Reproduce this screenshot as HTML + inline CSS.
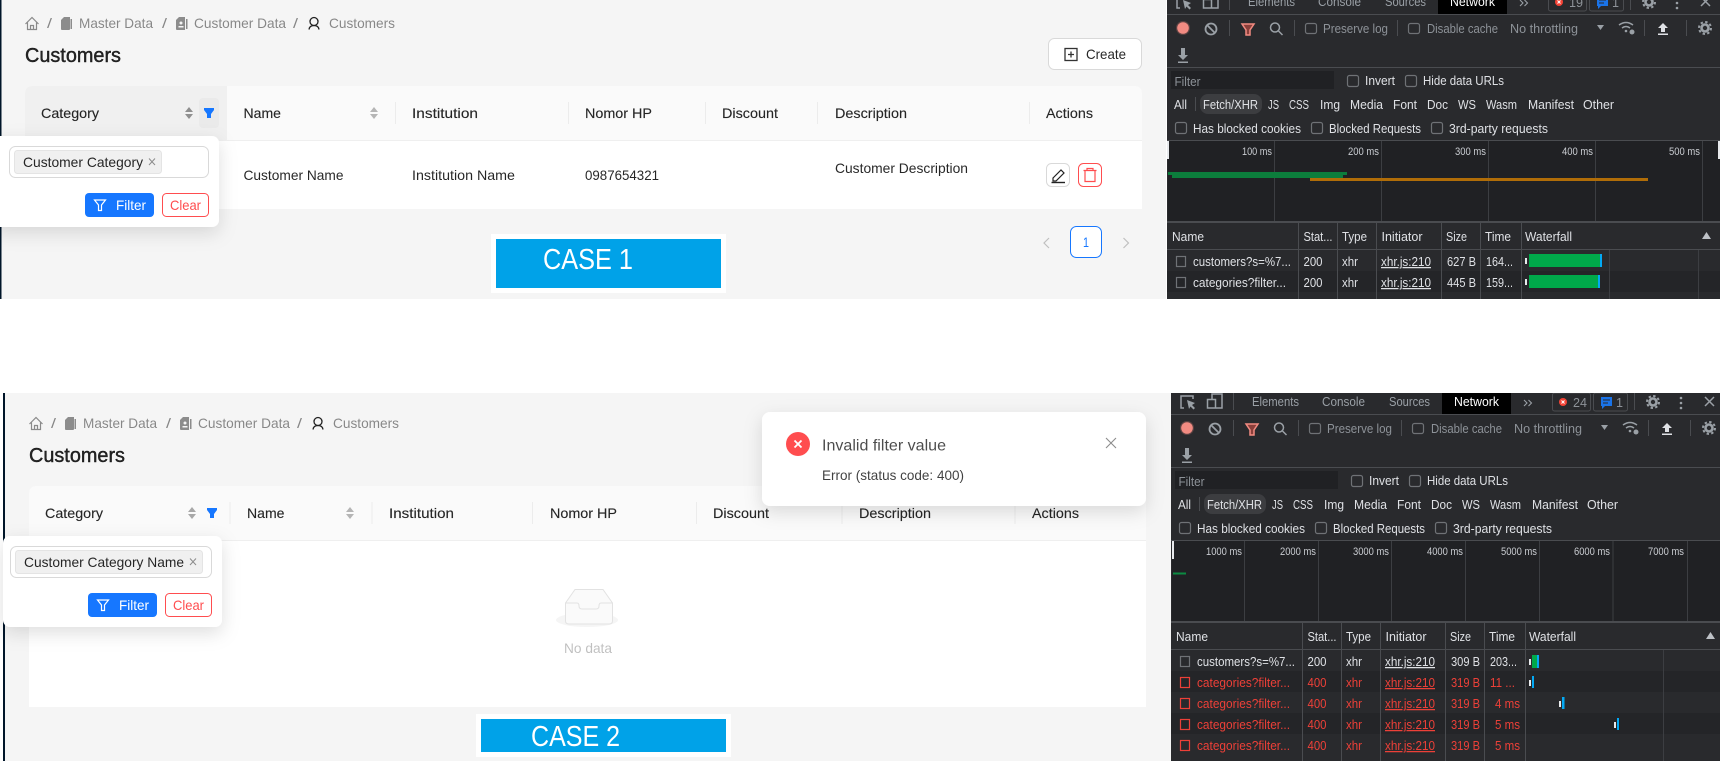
<!DOCTYPE html>
<html><head><meta charset="utf-8"><title>Customers</title>
<style>
html,body{margin:0;padding:0;background:#fff;width:1720px;height:761px;overflow:hidden}
svg{display:block}
text{font-family:"Liberation Sans",sans-serif;font-size:14px;fill:rgba(0,0,0,.85);white-space:pre}
.bc{fill:rgba(0,0,0,.45)}
.dt{font-size:12.5px;fill:#dfe1e5}
.dg{font-size:12.5px;fill:#8d9298}
.tb{font-size:12.5px;fill:#9aa0a6}
.rd{font-size:12.5px;fill:#ed4038}
.ms{font-size:11px;fill:#c9ccd1}
.ln{stroke:#4a4c50;stroke-width:1;fill:none}
.cb{fill:none;stroke:#6f7276;stroke-width:1.2}
.ic{fill:#9aa0a6}
.ics{fill:none;stroke:#9aa0a6;stroke-width:1.5}
.ge1{fill:none;stroke:#9aa0a6;stroke-width:2.6}
.ge2{fill:none;stroke:#9aa0a6;stroke-width:2;stroke-dasharray:2.4 2.31}
</style></head><body>
<svg width="1720" height="761" viewBox="0 0 1720 761" xmlns="http://www.w3.org/2000/svg">
<defs>
<filter id="sh" x="-30%" y="-40%" width="160%" height="200%"><feDropShadow dx="0" dy="6" stdDeviation="9" flood-color="#000" flood-opacity=".13"/></filter>
<clipPath id="c1"><rect x="1166" y="0" width="554" height="299"/></clipPath>
<clipPath id="c2"><rect x="1171" y="393" width="549" height="368"/></clipPath>
<clipPath id="a1"><rect x="0" y="0" width="1166" height="299"/></clipPath>
<clipPath id="a2"><rect x="0" y="393" width="1171" height="368"/></clipPath>
</defs>

<!-- CASE 1 APP -->
<g clip-path="url(#a1)">
<rect x="0" y="0" width="1166" height="299" fill="#f5f5f5"/>
<rect x="0" y="0" width="1.5" height="299" fill="#001529"/>
<path d="M25.5 24 L32 17.5 L38.5 24 M27.5 22.5 V29.5 H36.5 V22.5 M30.5 29.5 V25.5 H33.5 V29.5" fill="none" stroke="#8a8a8a" stroke-width="1.2"/>
<text class="bc" x="47" y="28" textLength="5" lengthAdjust="spacingAndGlyphs">/</text>
<path d="M61 20 L64 17 H70 V29 Q70 30 69 30 H62 Q61 30 61 29 Z" fill="#8c8c8c"/><rect x="70.500" y="19" width="1.500" height="10" fill="#8c8c8c"/>
<text class="bc" x="79" y="28" textLength="74" lengthAdjust="spacingAndGlyphs">Master Data</text>
<text class="bc" x="162" y="28" textLength="5" lengthAdjust="spacingAndGlyphs">/</text>
<path d="M176 20 L179 17 H185 V30 H177 Q176 30 176 29 Z" fill="#8c8c8c"/><rect x="186" y="19" width="1.5" height="10" fill="#8c8c8c"/><circle cx="181" cy="23" r="1.5" fill="#f5f5f5"/><rect x="178.500" y="26" width="5" height="1.500" fill="#f5f5f5"/>
<text class="bc" x="194" y="28" textLength="92" lengthAdjust="spacingAndGlyphs">Customer Data</text>
<text class="bc" x="293" y="28" textLength="5" lengthAdjust="spacingAndGlyphs">/</text>
<circle cx="314" cy="21.500" r="4" fill="none" stroke="#222" stroke-width="1.300"/><path d="M309 29.500 Q309.500 25.500 314 25.500 Q318.500 25.500 319 29.500" fill="none" stroke="#222" stroke-width="1.300"/>
<text class="bc" x="329" y="28" textLength="66" lengthAdjust="spacingAndGlyphs">Customers</text>
<text x="25" y="62" textLength="96" lengthAdjust="spacingAndGlyphs" style="font-size:20px;stroke:rgba(0,0,0,.85);stroke-width:.4">Customers</text>
<rect x="1048.500" y="38.500" width="93" height="31" rx="6" fill="#fff" stroke="#d9d9d9"/>
<rect x="1065" y="48.500" width="12" height="12" fill="none" stroke="#333" stroke-width="1.300"/><path d="M1071 51.500 V57.500 M1068 54.500 H1074" stroke="#333" stroke-width="1.300"/>
<text x="1086" y="59" textLength="40" lengthAdjust="spacingAndGlyphs">Create</text>
<path d="M25 94 Q25 86 33 86 H1134 Q1142 86 1142 94 V141 H25 Z" fill="#fafafa"/>
<path d="M25 94 Q25 86 33 86 H227 V141 H25 Z" fill="#f0f0f0"/>
<rect x="25" y="141" width="1117" height="68" fill="#fff"/>
<rect x="25" y="140" width="1117" height="1" fill="#efefef"/>
<g fill="#ececec"><rect x="395" y="102" width="1" height="22"/><rect x="568" y="102" width="1" height="22"/><rect x="705" y="102" width="1" height="22"/><rect x="817" y="102" width="1" height="22"/><rect x="1029" y="102" width="1" height="22"/></g>
<text x="41" y="118" textLength="58" lengthAdjust="spacingAndGlyphs" style="stroke:rgba(0,0,0,.5);stroke-width:.2">Category</text>
<text x="243.500" y="118" textLength="37.500" lengthAdjust="spacingAndGlyphs" style="stroke:rgba(0,0,0,.5);stroke-width:.2">Name</text>
<text x="412" y="118" textLength="66" lengthAdjust="spacingAndGlyphs" style="stroke:rgba(0,0,0,.5);stroke-width:.2">Institution</text>
<text x="585" y="118" textLength="67" lengthAdjust="spacingAndGlyphs" style="stroke:rgba(0,0,0,.5);stroke-width:.2">Nomor HP</text>
<text x="722" y="118" textLength="56" lengthAdjust="spacingAndGlyphs" style="stroke:rgba(0,0,0,.5);stroke-width:.2">Discount</text>
<text x="835" y="118" textLength="72" lengthAdjust="spacingAndGlyphs" style="stroke:rgba(0,0,0,.5);stroke-width:.2">Description</text>
<text x="1046" y="118" textLength="47" lengthAdjust="spacingAndGlyphs" style="stroke:rgba(0,0,0,.5);stroke-width:.2">Actions</text>
<path d="M189 107 L193 112 H185 Z M185 114 H193 L189 119 Z" fill="#8f8f8f"/>
<path d="M374 107 L378 112 H370 Z M370 114 H378 L374 119 Z" fill="#b5b5b5"/>
<rect x="199" y="98" width="20" height="30" rx="4" fill="#eaeaea"/>
<path d="M204 108 H214 V110 L211 114 V118 H207 V114 L204 110 Z" fill="#1677ff"/>
<text x="243.500" y="180" textLength="100" lengthAdjust="spacingAndGlyphs">Customer Name</text>
<text x="412" y="180" textLength="103" lengthAdjust="spacingAndGlyphs">Institution Name</text>
<text x="585" y="180" textLength="74" lengthAdjust="spacingAndGlyphs">0987654321</text>
<text x="835" y="173" textLength="133" lengthAdjust="spacingAndGlyphs">Customer Description</text>
<rect x="1046.500" y="163.500" width="23" height="23" rx="5" fill="#fff" stroke="#d9d9d9"/>
<path d="M1053 178 L1061 170 L1064 173 L1056 181 H1053 Z" fill="none" stroke="#222" stroke-width="1.200"/><path d="M1051.500 182.500 H1065" stroke="#222" stroke-width="1.400"/>
<rect x="1078.500" y="163.500" width="23" height="23" rx="5" fill="#fff" stroke="#ff4d4f"/>
<path d="M1083.500 170.500 H1096.500 M1087 170.500 V168.500 H1093 V170.500 M1085 170.500 V181.500 H1095 V170.500" fill="none" stroke="#ff4d4f" stroke-width="1.200"/>
<path d="M1049 238 L1044 243 L1049 248" fill="none" stroke="#bfbfbf" stroke-width="1.200"/>
<rect x="1070.500" y="226.500" width="31" height="31" rx="6" fill="#fff" stroke="#1677ff"/>
<text x="1083" y="247" textLength="6" lengthAdjust="spacingAndGlyphs" style="fill:#1677ff">1</text>
<path d="M1123.500 238 L1128.500 243 L1123.500 248" fill="none" stroke="#bfbfbf" stroke-width="1.200"/>
<rect x="-8" y="136" width="227" height="91" rx="7" fill="#fff" filter="url(#sh)"/>
<rect x="9.500" y="146.500" width="199" height="31" rx="6" fill="#fff" stroke="#d9d9d9"/>
<rect x="14.500" y="150.500" width="147" height="23" rx="3" fill="#f0f0f0" stroke="#e4e4e4"/>
<text x="23" y="167" textLength="120" lengthAdjust="spacingAndGlyphs">Customer Category</text>
<path d="M149 158.500 L155 165 M155 158.500 L149 165" stroke="#8c8c8c" stroke-width="1"/>
<rect x="85" y="193" width="69" height="24" rx="4" fill="#1677ff"/>
<path d="M94.500 200 H105.500 L101.500 205 V210.500 H98.500 V205 Z" fill="none" stroke="#fff" stroke-width="1.200"/>
<text x="116" y="210" textLength="30" lengthAdjust="spacingAndGlyphs" style="fill:#fff">Filter</text>
<rect x="162.500" y="193.500" width="46" height="23" rx="4" fill="#fff" stroke="#ff4d4f"/>
<text x="170" y="210" textLength="31" lengthAdjust="spacingAndGlyphs" style="fill:#ff4d4f">Clear</text>
<rect x="491" y="234" width="235" height="59" fill="#fff"/>
<rect x="496" y="239" width="225" height="49" fill="#00a2e8"/>
<text x="543" y="269" textLength="90" lengthAdjust="spacingAndGlyphs" style="font-size:29px;fill:#fff">CASE 1</text>
</g>

<!-- CASE 1 DEVTOOLS -->
<g clip-path="url(#c1)">
<rect x="1167" y="-7" width="553" height="368" fill="#292a2d"/>
<rect x="1438" y="-7" width="69" height="21" fill="#000"/>
<rect x="1167" y="14" width="553" height="1" fill="#4a4c50"/>
<path d="M1180 8 H1177 V-4 H1189 V-1" class="ics"/><path d="M1183 0 L1191 3 L1188 5 L1191 8 L1189.500 9.500 L1186.500 6.500 L1185 9 Z" class="ic"/>
<path d="M1208 0 V-6 H1218 V8 H1212" class="ics"/><rect x="1203.500" y="-0.500" width="8" height="8.500" class="ics"/>
<path d="M1229.500 -7 V10" class="ln"/>
<text class="tb" x="1248" y="6" textLength="47" lengthAdjust="spacingAndGlyphs">Elements</text>
<text class="tb" x="1318" y="6" textLength="43" lengthAdjust="spacingAndGlyphs">Console</text>
<text class="tb" x="1385" y="6" textLength="41" lengthAdjust="spacingAndGlyphs">Sources</text>
<text x="1450" y="6" textLength="45" lengthAdjust="spacingAndGlyphs" style="font-size:12.5px;fill:#fff">Network</text>
<path d="M1520 0 L1523 3 L1520 6 M1524.500 0 L1527.500 3 L1524.500 6" fill="none" stroke="#9aa0a6" stroke-width="1.100"/>
<rect x="1548.500" y="-7" width="38" height="18" rx="2" fill="none" stroke="#4a4c50"/><circle cx="1559" cy="2" r="4" fill="#f44336"/><path d="M1557.500 .5 L1560.500 3.500 M1560.500 .5 L1557.500 3.500" stroke="#fff" stroke-width="1"/>
<text class="dg" x="1569" y="7" textLength="14" lengthAdjust="spacingAndGlyphs">19</text>
<rect x="1589.500" y="-7" width="34" height="18" rx="2" fill="none" stroke="#4a4c50"/><path d="M1597 -3 H1608 V6 H1601 L1598 9 V6 H1597 Z" fill="#1a73e8"/><path d="M1599 0 H1606 M1599 3 H1604" stroke="#292a2d"/>
<text class="dg" x="1612" y="7" textLength="7" lengthAdjust="spacingAndGlyphs">1</text>
<path d="M1630.500 -7 V10" class="ln"/>
<circle cx="1649" cy="2" r="3.500" class="ge1"/><circle cx="1649" cy="2" r="6" class="ge2"/>
<circle cx="1677" cy="-2" r="1.300" class="ic"/><circle cx="1677" cy="3" r="1.300" class="ic"/><circle cx="1677" cy="8" r="1.300" class="ic"/>
<path d="M1701 -3 L1710 6 M1710 -3 L1701 6" class="ics"/>
<circle cx="1183" cy="28" r="7" fill="#f28b82" opacity=".25"/><circle cx="1183" cy="28" r="5.800" fill="#f28b82"/>
<circle cx="1211" cy="29" r="5.500" fill="none" stroke="#9aa0a6" stroke-width="1.800"/><path d="M1207 25 L1215 33" stroke="#9aa0a6" stroke-width="1.800"/>
<path d="M1229.500 20 V36" class="ln"/>
<path d="M1242 24 H1254 L1250 30 V35 H1246 V30 Z" fill="#8a3f3a" stroke="#f28b82" stroke-width="1.500"/>
<circle cx="1275" cy="27.500" r="4.500" class="ics"/><path d="M1278.500 31 L1282.500 35" class="ics"/>
<path d="M1294.500 20 V36" class="ln"/>
<rect x="1305.500" y="23.500" width="11" height="10" rx="2" class="cb"/>
<text class="dg" x="1323" y="33" textLength="65" lengthAdjust="spacingAndGlyphs">Preserve log</text>
<path d="M1397.500 20 V36" class="ln"/>
<rect x="1408.500" y="23.500" width="11" height="10" rx="2" class="cb"/>
<text class="dg" x="1427" y="33" textLength="71" lengthAdjust="spacingAndGlyphs">Disable cache</text>
<text class="dg" x="1510" y="33" textLength="68" lengthAdjust="spacingAndGlyphs">No throttling</text>
<path d="M1597 25 H1604 L1600.500 30 Z" class="ic"/>
<path d="M1619 25 Q1626 20 1633 25 M1622 28 Q1626 25 1630 28" class="ics"/><circle cx="1626" cy="31" r="1.300" class="ic"/><circle cx="1632" cy="32" r="2.500" class="ic"/>
<path d="M1644.500 20 V36" class="ln"/>
<path d="M1663 23 L1668 28 H1665 V32 H1661 V28 H1658 Z M1658 33.500 H1668 V35 H1658 Z" fill="#dfe1e5"/>
<path d="M1686.500 20 V36" class="ln"/>
<circle cx="1705" cy="28" r="3.500" class="ge1"/><circle cx="1705" cy="28" r="6" class="ge2"/>
<path d="M1183 60 L1178 55 H1181 V48 H1185 V55 H1188 Z M1178 61.500 H1188 V63 H1178 Z" fill="#9aa0a6"/>
<rect x="1167" y="67" width="553" height="1" fill="#4a4c50"/>
<rect x="1171" y="71" width="163" height="18" fill="#202124"/>
<text class="dg" x="1174.500" y="86" textLength="26" lengthAdjust="spacingAndGlyphs">Filter</text>
<rect x="1347.500" y="75.500" width="11" height="11" rx="2" class="cb"/>
<text class="dt" x="1365" y="85" textLength="30" lengthAdjust="spacingAndGlyphs">Invert</text>
<rect x="1405.500" y="75.500" width="11" height="11" rx="2" class="cb"/>
<text class="dt" x="1423" y="85" textLength="81" lengthAdjust="spacingAndGlyphs">Hide data URLs</text>
<text class="dt" x="1174" y="109" textLength="13" lengthAdjust="spacingAndGlyphs">All</text>
<path d="M1195.500 97 V111" class="ln"/>
<rect x="1200" y="94" width="62" height="20" rx="8" fill="#3c3d40"/>
<text class="dt" x="1203" y="109" textLength="55" lengthAdjust="spacingAndGlyphs">Fetch/XHR</text>
<text class="dt" x="1268" y="109" textLength="11" lengthAdjust="spacingAndGlyphs">JS</text>
<text class="dt" x="1289" y="109" textLength="20" lengthAdjust="spacingAndGlyphs">CSS</text>
<text class="dt" x="1320" y="109" textLength="20" lengthAdjust="spacingAndGlyphs">Img</text>
<text class="dt" x="1350" y="109" textLength="33" lengthAdjust="spacingAndGlyphs">Media</text>
<text class="dt" x="1393" y="109" textLength="24" lengthAdjust="spacingAndGlyphs">Font</text>
<text class="dt" x="1427" y="109" textLength="21" lengthAdjust="spacingAndGlyphs">Doc</text>
<text class="dt" x="1458" y="109" textLength="18" lengthAdjust="spacingAndGlyphs">WS</text>
<text class="dt" x="1486" y="109" textLength="31" lengthAdjust="spacingAndGlyphs">Wasm</text>
<text class="dt" x="1528" y="109" textLength="46" lengthAdjust="spacingAndGlyphs">Manifest</text>
<text class="dt" x="1583" y="109" textLength="31" lengthAdjust="spacingAndGlyphs">Other</text>
<rect x="1175.500" y="122.500" width="11" height="11" rx="2" class="cb"/>
<text class="dt" x="1193" y="133" textLength="108" lengthAdjust="spacingAndGlyphs">Has blocked cookies</text>
<rect x="1311.500" y="122.500" width="11" height="11" rx="2" class="cb"/>
<text class="dt" x="1329" y="133" textLength="92" lengthAdjust="spacingAndGlyphs">Blocked Requests</text>
<rect x="1431.500" y="122.500" width="11" height="11" rx="2" class="cb"/>
<text class="dt" x="1449" y="133" textLength="99" lengthAdjust="spacingAndGlyphs">3rd-party requests</text>
<rect x="1167" y="140" width="553" height="1" fill="#4a4c50"/>
<rect x="1168" y="141" width="552" height="80" fill="#202124"/>
<g fill="#3c3e42"><rect x="1274" y="141" width="1" height="80"/><rect x="1381" y="141" width="1" height="80"/><rect x="1488" y="141" width="1" height="80"/><rect x="1595" y="141" width="1" height="80"/><rect x="1702" y="141" width="1" height="80"/></g>
<rect x="1167" y="141" width="2" height="18" fill="#e8eaed"/><rect x="1718" y="141" width="2" height="18" fill="#e8eaed"/>
<text class="ms" x="1242" y="155" textLength="30" lengthAdjust="spacingAndGlyphs">100 ms</text>
<text class="ms" x="1348" y="155" textLength="31" lengthAdjust="spacingAndGlyphs">200 ms</text>
<text class="ms" x="1455" y="155" textLength="31" lengthAdjust="spacingAndGlyphs">300 ms</text>
<text class="ms" x="1562" y="155" textLength="31" lengthAdjust="spacingAndGlyphs">400 ms</text>
<text class="ms" x="1669" y="155" textLength="31" lengthAdjust="spacingAndGlyphs">500 ms</text>
<rect x="1168" y="172" width="179" height="3" fill="#0c7d3c"/>
<rect x="1172" y="175" width="171" height="3" fill="#0c7d3c"/>
<rect x="1310" y="178" width="338" height="3" fill="#b06d08"/>
<rect x="1167" y="221" width="553" height="2" fill="#4a4c50"/>
<rect x="1167" y="249" width="553" height="1" fill="#4a4c50"/>
<text class="dt" x="1172" y="241" textLength="32" lengthAdjust="spacingAndGlyphs">Name</text>
<text class="dt" x="1303.500" y="241" textLength="29" lengthAdjust="spacingAndGlyphs">Stat...</text>
<text class="dt" x="1342" y="241" textLength="25" lengthAdjust="spacingAndGlyphs">Type</text>
<text class="dt" x="1381.500" y="241" textLength="41" lengthAdjust="spacingAndGlyphs">Initiator</text>
<text class="dt" x="1446" y="241" textLength="21" lengthAdjust="spacingAndGlyphs">Size</text>
<text class="dt" x="1485" y="241" textLength="26" lengthAdjust="spacingAndGlyphs">Time</text>
<text class="dt" x="1525" y="241" textLength="47" lengthAdjust="spacingAndGlyphs">Waterfall</text>
<path d="M1702 239 H1711 L1706.500 232 Z" fill="#bdc1c6"/>
<rect x="1167" y="271" width="553" height="21" fill="#242528"/>
<g fill="#4a4c50"><rect x="1298" y="223" width="1" height="76"/><rect x="1337" y="223" width="1" height="76"/><rect x="1376" y="223" width="1" height="76"/><rect x="1441" y="223" width="1" height="76"/><rect x="1480" y="223" width="1" height="76"/><rect x="1521" y="223" width="1" height="76"/></g>
<g fill="#3c3e42"><rect x="1609" y="250" width="1" height="49"/><rect x="1698" y="250" width="1" height="49"/></g>
<rect x="1176.500" y="256.500" width="9" height="10" class="cb"/>
<text class="dt" x="1193" y="266" textLength="98" lengthAdjust="spacingAndGlyphs">customers?s=%7...</text>
<text class="dt" x="1303.500" y="266" textLength="19" lengthAdjust="spacingAndGlyphs">200</text>
<text class="dt" x="1342" y="266" textLength="16" lengthAdjust="spacingAndGlyphs">xhr</text>
<text class="dt" x="1381" y="266" textLength="50" lengthAdjust="spacingAndGlyphs" text-decoration="underline">xhr.js:210</text>
<text class="dt" x="1447" y="266" textLength="29" lengthAdjust="spacingAndGlyphs">627 B</text>
<text class="dt" x="1486" y="266" textLength="27" lengthAdjust="spacingAndGlyphs">164...</text>
<rect x="1525" y="258" width="2" height="6" fill="#e8eaed"/><rect x="1529" y="254" width="71" height="13" fill="#00a84a"/><rect x="1600" y="254" width="2" height="13" fill="#03a9f4"/>
<rect x="1176.500" y="277.500" width="9" height="10" class="cb"/>
<text class="dt" x="1193" y="287" textLength="93" lengthAdjust="spacingAndGlyphs">categories?filter...</text>
<text class="dt" x="1303.500" y="287" textLength="19" lengthAdjust="spacingAndGlyphs">200</text>
<text class="dt" x="1342" y="287" textLength="16" lengthAdjust="spacingAndGlyphs">xhr</text>
<text class="dt" x="1381" y="287" textLength="50" lengthAdjust="spacingAndGlyphs" text-decoration="underline">xhr.js:210</text>
<text class="dt" x="1447" y="287" textLength="29" lengthAdjust="spacingAndGlyphs">445 B</text>
<text class="dt" x="1486" y="287" textLength="27" lengthAdjust="spacingAndGlyphs">159...</text>
<rect x="1525" y="279" width="2" height="6" fill="#e8eaed"/><rect x="1529" y="275" width="69" height="13" fill="#00a84a"/><rect x="1598" y="275" width="2" height="13" fill="#03a9f4"/>
</g>

<!-- CASE 2 APP -->
<g clip-path="url(#a2)">
<rect x="3" y="393" width="1168" height="368" fill="#f5f5f5"/>
<rect x="3" y="393" width="2" height="368" fill="#001529"/>
<g transform="translate(4,400)">
<path d="M25.500 24 L32 17.500 L38.500 24 M27.500 22.500 V29.500 H36.500 V22.500 M30.500 29.500 V25.500 H33.500 V29.500" fill="none" stroke="#8a8a8a" stroke-width="1.200"/>
<text class="bc" x="47" y="28" textLength="5" lengthAdjust="spacingAndGlyphs">/</text>
<path d="M61 20 L64 17 H70 V29 Q70 30 69 30 H62 Q61 30 61 29 Z" fill="#8c8c8c"/><rect x="70.500" y="19" width="1.500" height="10" fill="#8c8c8c"/>
<text class="bc" x="79" y="28" textLength="74" lengthAdjust="spacingAndGlyphs">Master Data</text>
<text class="bc" x="162" y="28" textLength="5" lengthAdjust="spacingAndGlyphs">/</text>
<path d="M176 20 L179 17 H185 V30 H177 Q176 30 176 29 Z" fill="#8c8c8c"/><rect x="186" y="19" width="1.500" height="10" fill="#8c8c8c"/><circle cx="181" cy="23" r="1.500" fill="#f5f5f5"/><rect x="178.500" y="26" width="5" height="1.500" fill="#f5f5f5"/>
<text class="bc" x="194" y="28" textLength="92" lengthAdjust="spacingAndGlyphs">Customer Data</text>
<text class="bc" x="293" y="28" textLength="5" lengthAdjust="spacingAndGlyphs">/</text>
<circle cx="314" cy="21.500" r="4" fill="none" stroke="#222" stroke-width="1.300"/><path d="M309 29.500 Q309.500 25.500 314 25.500 Q318.500 25.500 319 29.500" fill="none" stroke="#222" stroke-width="1.300"/>
<text class="bc" x="329" y="28" textLength="66" lengthAdjust="spacingAndGlyphs">Customers</text>
<text x="25" y="62" textLength="96" lengthAdjust="spacingAndGlyphs" style="font-size:20px;stroke:rgba(0,0,0,.85);stroke-width:.4">Customers</text>
</g>
<path d="M29 494 Q29 486 37 486 H1138 Q1146 486 1146 494 V541 H29 Z" fill="#fafafa"/>
<rect x="29" y="541" width="1117" height="166" fill="#fff"/>
<rect x="29" y="540" width="1117" height="1" fill="#efefef"/>
<g fill="#ececec"><rect x="229.500" y="502" width="1" height="22"/><rect x="371.500" y="502" width="1" height="22"/><rect x="532" y="502" width="1" height="22"/><rect x="696" y="502" width="1" height="22"/><rect x="841.500" y="502" width="1" height="22"/><rect x="1014.500" y="502" width="1" height="22"/></g>
<text x="45" y="518" textLength="58" lengthAdjust="spacingAndGlyphs" style="stroke:rgba(0,0,0,.5);stroke-width:.2">Category</text>
<text x="247" y="518" textLength="37.500" lengthAdjust="spacingAndGlyphs" style="stroke:rgba(0,0,0,.5);stroke-width:.2">Name</text>
<text x="389" y="518" textLength="65" lengthAdjust="spacingAndGlyphs" style="stroke:rgba(0,0,0,.5);stroke-width:.2">Institution</text>
<text x="550" y="518" textLength="67" lengthAdjust="spacingAndGlyphs" style="stroke:rgba(0,0,0,.5);stroke-width:.2">Nomor HP</text>
<text x="713" y="518" textLength="56" lengthAdjust="spacingAndGlyphs" style="stroke:rgba(0,0,0,.5);stroke-width:.2">Discount</text>
<text x="859" y="518" textLength="72" lengthAdjust="spacingAndGlyphs" style="stroke:rgba(0,0,0,.5);stroke-width:.2">Description</text>
<text x="1032" y="518" textLength="47" lengthAdjust="spacingAndGlyphs" style="stroke:rgba(0,0,0,.5);stroke-width:.2">Actions</text>
<path d="M192 507 L196 512 H188 Z M188 514 H196 L192 519 Z" fill="#a8a8a8"/>
<path d="M350 507 L354 512 H346 Z M346 514 H354 L350 519 Z" fill="#b5b5b5"/>
<path d="M207 508 H217 V510 L214 514 V518 H210 V514 L207 510 Z" fill="#1677ff"/>
<ellipse cx="587" cy="620" rx="31" ry="7" fill="#f5f5f5"/>
<path d="M565.500 603 L575 589.500 H603 L612.500 603 V621 Q612.500 624 609 624 H569 Q565.500 624 565.500 621 Z" fill="#fafafa" stroke="#e2e2e2"/>
<path d="M565.500 603 H577 Q579 603 579 606 Q579 609 582 609 H596 Q599 609 599 606 Q599 603 601 603 H612.500" fill="none" stroke="#e2e2e2"/>
<text x="564" y="653" textLength="48" lengthAdjust="spacingAndGlyphs" style="fill:rgba(0,0,0,.25)">No data</text>
<rect x="3" y="536" width="219" height="91" rx="7" fill="#fff" filter="url(#sh)"/>
<rect x="10.500" y="546.500" width="201" height="31" rx="6" fill="#fff" stroke="#d9d9d9"/>
<rect x="15.500" y="550.500" width="187" height="23" rx="3" fill="#f0f0f0" stroke="#e4e4e4"/>
<text x="24" y="567" textLength="160" lengthAdjust="spacingAndGlyphs">Customer Category Name</text>
<path d="M190 558.500 L196 565 M196 558.500 L190 565" stroke="#8c8c8c" stroke-width="1"/>
<rect x="88" y="593" width="69" height="24" rx="4" fill="#1677ff"/>
<path d="M97.500 600 H108.500 L104.500 605 V610.500 H101.500 V605 Z" fill="none" stroke="#fff" stroke-width="1.200"/>
<text x="119" y="610" textLength="30" lengthAdjust="spacingAndGlyphs" style="fill:#fff">Filter</text>
<rect x="165.500" y="593.500" width="46" height="23" rx="4" fill="#fff" stroke="#ff4d4f"/>
<text x="173" y="610" textLength="31" lengthAdjust="spacingAndGlyphs" style="fill:#ff4d4f">Clear</text>
<rect x="762" y="412" width="384" height="94" rx="8" fill="#fff" filter="url(#sh)"/>
<circle cx="798" cy="444" r="12" fill="#ff4d4f"/><path d="M794.500 440.500 L801.500 447.500 M801.500 440.500 L794.500 447.500" stroke="#fff" stroke-width="1.800"/>
<text x="822" y="450.500" textLength="124" lengthAdjust="spacingAndGlyphs" style="font-size:16px;fill:rgba(0,0,0,.7)">Invalid filter value</text>
<text x="822" y="480" textLength="142" lengthAdjust="spacingAndGlyphs" style="fill:rgba(0,0,0,.75)">Error (status code: 400)</text>
<path d="M1106 438 L1116 448 M1116 438 L1106 448" stroke="#8c8c8c" stroke-width="1.100"/>
<rect x="476" y="714" width="255" height="43" fill="#fff"/>
<rect x="481" y="719" width="245" height="33" fill="#00a2e8"/>
<text x="531" y="746" textLength="89" lengthAdjust="spacingAndGlyphs" style="font-size:29px;fill:#fff">CASE 2</text>
</g>

<!-- CASE 2 DEVTOOLS -->
<g clip-path="url(#c2)">
<g transform="translate(4,400)">
<rect x="1167" y="-7" width="553" height="368" fill="#292a2d"/>
<rect x="1438" y="-7" width="69" height="21" fill="#000"/>
<rect x="1167" y="14" width="553" height="1" fill="#4a4c50"/>
<path d="M1180 8 H1177 V-4 H1189 V-1" class="ics"/><path d="M1183 0 L1191 3 L1188 5 L1191 8 L1189.500 9.500 L1186.500 6.500 L1185 9 Z" class="ic"/>
<path d="M1208 0 V-6 H1218 V8 H1212" class="ics"/><rect x="1203.500" y="-0.500" width="8" height="8.500" class="ics"/>
<path d="M1229.500 -7 V10" class="ln"/>
<text class="tb" x="1248" y="6" textLength="47" lengthAdjust="spacingAndGlyphs">Elements</text>
<text class="tb" x="1318" y="6" textLength="43" lengthAdjust="spacingAndGlyphs">Console</text>
<text class="tb" x="1385" y="6" textLength="41" lengthAdjust="spacingAndGlyphs">Sources</text>
<text x="1450" y="6" textLength="45" lengthAdjust="spacingAndGlyphs" style="font-size:12.5px;fill:#fff">Network</text>
<path d="M1520 0 L1523 3 L1520 6 M1524.500 0 L1527.500 3 L1524.500 6" fill="none" stroke="#9aa0a6" stroke-width="1.100"/>
<rect x="1548.500" y="-7" width="38" height="18" rx="2" fill="none" stroke="#4a4c50"/><circle cx="1559" cy="2" r="4" fill="#f44336"/><path d="M1557.500 .5 L1560.500 3.500 M1560.500 .5 L1557.500 3.500" stroke="#fff" stroke-width="1"/>
<text class="dg" x="1569" y="7" textLength="14" lengthAdjust="spacingAndGlyphs">24</text>
<rect x="1589.500" y="-7" width="34" height="18" rx="2" fill="none" stroke="#4a4c50"/><path d="M1597 -3 H1608 V6 H1601 L1598 9 V6 H1597 Z" fill="#1a73e8"/><path d="M1599 0 H1606 M1599 3 H1604" stroke="#292a2d"/>
<text class="dg" x="1612" y="7" textLength="7" lengthAdjust="spacingAndGlyphs">1</text>
<path d="M1630.500 -7 V10" class="ln"/>
<circle cx="1649" cy="2" r="3.500" class="ge1"/><circle cx="1649" cy="2" r="6" class="ge2"/>
<circle cx="1677" cy="-2" r="1.300" class="ic"/><circle cx="1677" cy="3" r="1.300" class="ic"/><circle cx="1677" cy="8" r="1.300" class="ic"/>
<path d="M1701 -3 L1710 6 M1710 -3 L1701 6" class="ics"/>
<circle cx="1183" cy="28" r="7" fill="#f28b82" opacity=".25"/><circle cx="1183" cy="28" r="5.800" fill="#f28b82"/>
<circle cx="1211" cy="29" r="5.500" fill="none" stroke="#9aa0a6" stroke-width="1.800"/><path d="M1207 25 L1215 33" stroke="#9aa0a6" stroke-width="1.800"/>
<path d="M1229.500 20 V36" class="ln"/>
<path d="M1242 24 H1254 L1250 30 V35 H1246 V30 Z" fill="#8a3f3a" stroke="#f28b82" stroke-width="1.500"/>
<circle cx="1275" cy="27.500" r="4.500" class="ics"/><path d="M1278.500 31 L1282.500 35" class="ics"/>
<path d="M1294.500 20 V36" class="ln"/>
<rect x="1305.500" y="23.500" width="11" height="10" rx="2" class="cb"/>
<text class="dg" x="1323" y="33" textLength="65" lengthAdjust="spacingAndGlyphs">Preserve log</text>
<path d="M1397.500 20 V36" class="ln"/>
<rect x="1408.500" y="23.500" width="11" height="10" rx="2" class="cb"/>
<text class="dg" x="1427" y="33" textLength="71" lengthAdjust="spacingAndGlyphs">Disable cache</text>
<text class="dg" x="1510" y="33" textLength="68" lengthAdjust="spacingAndGlyphs">No throttling</text>
<path d="M1597 25 H1604 L1600.500 30 Z" class="ic"/>
<path d="M1619 25 Q1626 20 1633 25 M1622 28 Q1626 25 1630 28" class="ics"/><circle cx="1626" cy="31" r="1.300" class="ic"/><circle cx="1632" cy="32" r="2.500" class="ic"/>
<path d="M1644.500 20 V36" class="ln"/>
<path d="M1663 23 L1668 28 H1665 V32 H1661 V28 H1658 Z M1658 33.500 H1668 V35 H1658 Z" fill="#dfe1e5"/>
<path d="M1686.500 20 V36" class="ln"/>
<circle cx="1705" cy="28" r="3.500" class="ge1"/><circle cx="1705" cy="28" r="6" class="ge2"/>
<path d="M1183 60 L1178 55 H1181 V48 H1185 V55 H1188 Z M1178 61.500 H1188 V63 H1178 Z" fill="#9aa0a6"/>
<rect x="1167" y="67" width="553" height="1" fill="#4a4c50"/>
<rect x="1171" y="71" width="163" height="18" fill="#202124"/>
<text class="dg" x="1174.500" y="86" textLength="26" lengthAdjust="spacingAndGlyphs">Filter</text>
<rect x="1347.500" y="75.500" width="11" height="11" rx="2" class="cb"/>
<text class="dt" x="1365" y="85" textLength="30" lengthAdjust="spacingAndGlyphs">Invert</text>
<rect x="1405.500" y="75.500" width="11" height="11" rx="2" class="cb"/>
<text class="dt" x="1423" y="85" textLength="81" lengthAdjust="spacingAndGlyphs">Hide data URLs</text>
<text class="dt" x="1174" y="109" textLength="13" lengthAdjust="spacingAndGlyphs">All</text>
<path d="M1195.500 97 V111" class="ln"/>
<rect x="1200" y="94" width="62" height="20" rx="8" fill="#3c3d40"/>
<text class="dt" x="1203" y="109" textLength="55" lengthAdjust="spacingAndGlyphs">Fetch/XHR</text>
<text class="dt" x="1268" y="109" textLength="11" lengthAdjust="spacingAndGlyphs">JS</text>
<text class="dt" x="1289" y="109" textLength="20" lengthAdjust="spacingAndGlyphs">CSS</text>
<text class="dt" x="1320" y="109" textLength="20" lengthAdjust="spacingAndGlyphs">Img</text>
<text class="dt" x="1350" y="109" textLength="33" lengthAdjust="spacingAndGlyphs">Media</text>
<text class="dt" x="1393" y="109" textLength="24" lengthAdjust="spacingAndGlyphs">Font</text>
<text class="dt" x="1427" y="109" textLength="21" lengthAdjust="spacingAndGlyphs">Doc</text>
<text class="dt" x="1458" y="109" textLength="18" lengthAdjust="spacingAndGlyphs">WS</text>
<text class="dt" x="1486" y="109" textLength="31" lengthAdjust="spacingAndGlyphs">Wasm</text>
<text class="dt" x="1528" y="109" textLength="46" lengthAdjust="spacingAndGlyphs">Manifest</text>
<text class="dt" x="1583" y="109" textLength="31" lengthAdjust="spacingAndGlyphs">Other</text>
<rect x="1175.500" y="122.500" width="11" height="11" rx="2" class="cb"/>
<text class="dt" x="1193" y="133" textLength="108" lengthAdjust="spacingAndGlyphs">Has blocked cookies</text>
<rect x="1311.500" y="122.500" width="11" height="11" rx="2" class="cb"/>
<text class="dt" x="1329" y="133" textLength="92" lengthAdjust="spacingAndGlyphs">Blocked Requests</text>
<rect x="1431.500" y="122.500" width="11" height="11" rx="2" class="cb"/>
<text class="dt" x="1449" y="133" textLength="99" lengthAdjust="spacingAndGlyphs">3rd-party requests</text>
<rect x="1167" y="140" width="553" height="1" fill="#4a4c50"/>
<rect x="1168" y="141" width="552" height="80" fill="#202124"/>
<g fill="#3c3e42"><rect x="1240" y="141" width="1" height="80"/><rect x="1314" y="141" width="1" height="80"/><rect x="1387" y="141" width="1" height="80"/><rect x="1461" y="141" width="1" height="80"/><rect x="1535" y="141" width="1" height="80"/><rect x="1608.500" y="141" width="1" height="80"/><rect x="1683" y="141" width="1" height="80"/></g>
<rect x="1168" y="141" width="2" height="18" fill="#e8eaed"/>
<text class="ms" x="1202" y="155" textLength="36" lengthAdjust="spacingAndGlyphs">1000 ms</text>
<text class="ms" x="1276" y="155" textLength="36" lengthAdjust="spacingAndGlyphs">2000 ms</text>
<text class="ms" x="1349" y="155" textLength="36" lengthAdjust="spacingAndGlyphs">3000 ms</text>
<text class="ms" x="1423" y="155" textLength="36" lengthAdjust="spacingAndGlyphs">4000 ms</text>
<text class="ms" x="1497" y="155" textLength="36" lengthAdjust="spacingAndGlyphs">5000 ms</text>
<text class="ms" x="1570" y="155" textLength="36" lengthAdjust="spacingAndGlyphs">6000 ms</text>
<text class="ms" x="1644" y="155" textLength="36" lengthAdjust="spacingAndGlyphs">7000 ms</text>
<rect x="1169" y="172.500" width="13" height="2" fill="#0c8a42"/>
<rect x="1167" y="221" width="553" height="2" fill="#4a4c50"/>
<rect x="1167" y="249" width="553" height="1" fill="#4a4c50"/>
<text class="dt" x="1172" y="241" textLength="32" lengthAdjust="spacingAndGlyphs">Name</text>
<text class="dt" x="1303.500" y="241" textLength="29" lengthAdjust="spacingAndGlyphs">Stat...</text>
<text class="dt" x="1342" y="241" textLength="25" lengthAdjust="spacingAndGlyphs">Type</text>
<text class="dt" x="1381.500" y="241" textLength="41" lengthAdjust="spacingAndGlyphs">Initiator</text>
<text class="dt" x="1446" y="241" textLength="21" lengthAdjust="spacingAndGlyphs">Size</text>
<text class="dt" x="1485" y="241" textLength="26" lengthAdjust="spacingAndGlyphs">Time</text>
<text class="dt" x="1525" y="241" textLength="47" lengthAdjust="spacingAndGlyphs">Waterfall</text>
<path d="M1702 239 H1711 L1706.500 232 Z" fill="#bdc1c6"/>
<rect x="1167" y="271" width="553" height="21" fill="#242528"/>
<rect x="1167" y="313" width="553" height="21" fill="#242528"/>
<g fill="#4a4c50"><rect x="1298" y="223" width="1" height="138"/><rect x="1337" y="223" width="1" height="138"/><rect x="1376" y="223" width="1" height="138"/><rect x="1441" y="223" width="1" height="138"/><rect x="1480" y="223" width="1" height="138"/><rect x="1521" y="223" width="1" height="138"/></g>
<rect x="1659" y="250" width="1" height="111" fill="#3c3e42"/>
<rect x="1176.500" y="256.500" width="9" height="10" class="cb"/>
<text class="dt" x="1193" y="266" textLength="98" lengthAdjust="spacingAndGlyphs">customers?s=%7...</text>
<text class="dt" x="1303.500" y="266" textLength="19" lengthAdjust="spacingAndGlyphs">200</text>
<text class="dt" x="1342" y="266" textLength="16" lengthAdjust="spacingAndGlyphs">xhr</text>
<text class="dt" x="1381" y="266" textLength="50" lengthAdjust="spacingAndGlyphs" text-decoration="underline">xhr.js:210</text>
<text class="dt" x="1447" y="266" textLength="29" lengthAdjust="spacingAndGlyphs">309 B</text>
<text class="dt" x="1486" y="266" textLength="27" lengthAdjust="spacingAndGlyphs">203...</text>
<rect x="1525" y="259" width="2" height="6" fill="#e8eaed"/><rect x="1528" y="255" width="5" height="13" fill="#00a84a"/><rect x="1533" y="255" width="2" height="13" fill="#03a9f4"/>
<rect x="1176.500" y="277.500" width="9" height="10" fill="none" stroke="#ed4038" stroke-width="1.200"/>
<text class="rd" x="1193" y="287" textLength="93" lengthAdjust="spacingAndGlyphs">categories?filter...</text>
<text class="rd" x="1303.500" y="287" textLength="19" lengthAdjust="spacingAndGlyphs">400</text>
<text class="rd" x="1342" y="287" textLength="16" lengthAdjust="spacingAndGlyphs">xhr</text>
<text class="rd" x="1381" y="287" textLength="50" lengthAdjust="spacingAndGlyphs" text-decoration="underline">xhr.js:210</text>
<text class="rd" x="1447" y="287" textLength="29" lengthAdjust="spacingAndGlyphs">319 B</text>
<text class="rd" x="1486" y="287" textLength="25" lengthAdjust="spacingAndGlyphs">11 ...</text>
<rect x="1525" y="280" width="2" height="6" fill="#e8eaed"/><rect x="1528" y="276" width="2" height="12" fill="#03a9f4"/>
<rect x="1176.500" y="298.500" width="9" height="10" fill="none" stroke="#ed4038" stroke-width="1.200"/>
<text class="rd" x="1193" y="308" textLength="93" lengthAdjust="spacingAndGlyphs">categories?filter...</text>
<text class="rd" x="1303.500" y="308" textLength="19" lengthAdjust="spacingAndGlyphs">400</text>
<text class="rd" x="1342" y="308" textLength="16" lengthAdjust="spacingAndGlyphs">xhr</text>
<text class="rd" x="1381" y="308" textLength="50" lengthAdjust="spacingAndGlyphs" text-decoration="underline">xhr.js:210</text>
<text class="rd" x="1447" y="308" textLength="29" lengthAdjust="spacingAndGlyphs">319 B</text>
<text class="rd" x="1491" y="308" textLength="25" lengthAdjust="spacingAndGlyphs">4 ms</text>
<rect x="1555" y="301" width="2" height="6" fill="#e8eaed"/><rect x="1558" y="297" width="2.500" height="12" fill="#03a9f4"/>
<rect x="1176.500" y="319.500" width="9" height="10" fill="none" stroke="#ed4038" stroke-width="1.200"/>
<text class="rd" x="1193" y="329" textLength="93" lengthAdjust="spacingAndGlyphs">categories?filter...</text>
<text class="rd" x="1303.500" y="329" textLength="19" lengthAdjust="spacingAndGlyphs">400</text>
<text class="rd" x="1342" y="329" textLength="16" lengthAdjust="spacingAndGlyphs">xhr</text>
<text class="rd" x="1381" y="329" textLength="50" lengthAdjust="spacingAndGlyphs" text-decoration="underline">xhr.js:210</text>
<text class="rd" x="1447" y="329" textLength="29" lengthAdjust="spacingAndGlyphs">319 B</text>
<text class="rd" x="1491" y="329" textLength="25" lengthAdjust="spacingAndGlyphs">5 ms</text>
<rect x="1610" y="322" width="2" height="6" fill="#e8eaed"/><rect x="1613" y="318" width="2" height="12" fill="#03a9f4"/>
<rect x="1176.500" y="340.500" width="9" height="10" fill="none" stroke="#ed4038" stroke-width="1.200"/>
<text class="rd" x="1193" y="350" textLength="93" lengthAdjust="spacingAndGlyphs">categories?filter...</text>
<text class="rd" x="1303.500" y="350" textLength="19" lengthAdjust="spacingAndGlyphs">400</text>
<text class="rd" x="1342" y="350" textLength="16" lengthAdjust="spacingAndGlyphs">xhr</text>
<text class="rd" x="1381" y="350" textLength="50" lengthAdjust="spacingAndGlyphs" text-decoration="underline">xhr.js:210</text>
<text class="rd" x="1447" y="350" textLength="29" lengthAdjust="spacingAndGlyphs">319 B</text>
<text class="rd" x="1491" y="350" textLength="25" lengthAdjust="spacingAndGlyphs">5 ms</text>
</g>
</g>
</svg>
</body></html>
